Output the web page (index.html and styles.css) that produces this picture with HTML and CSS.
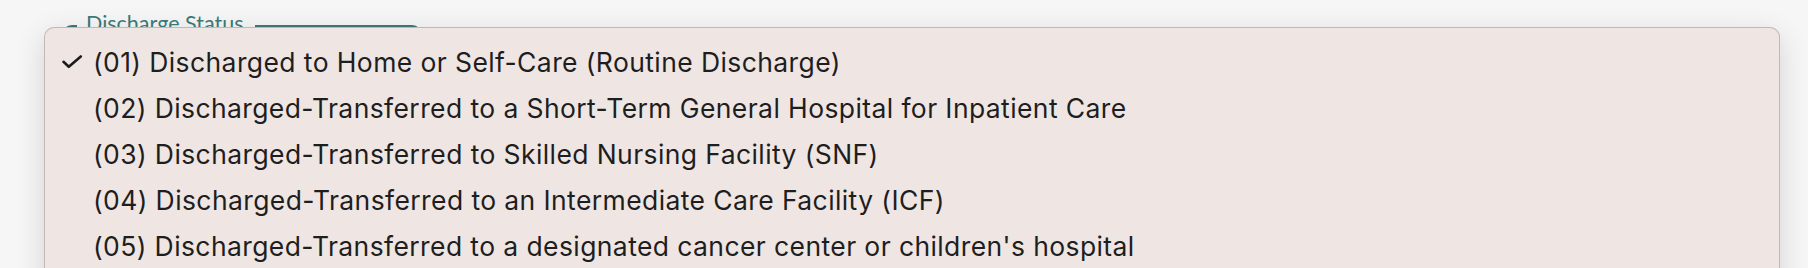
FILE: index.html
```html
<!DOCTYPE html>
<html lang="en">
<head>
  <meta charset="UTF-8">
  <title>Discharge Status</title>
  <link rel="stylesheet" href="styles.css">
</head>
<body>
  <!-- form field behind the open menu -->
  <div class="form-area">
    <fieldset class="field">
      <legend class="field-label">Discharge Status</legend>
    </fieldset>
  </div>

  <!-- open select menu -->
  <ul class="menu">
    <li class="menu-item selected">
      <span class="check">
        <svg width="21" height="14" viewBox="0 0 21 14"><polyline points="1.5,6.8 6.8,11.8 18.8,1.5" fill="none" stroke="#1c1c1c" stroke-width="2.6" stroke-linecap="round" stroke-linejoin="round"/></svg>
      </span>
      <span class="label">(01) Discharged to Home or Self-Care (Routine Discharge)</span>
    </li>
    <li class="menu-item">
      <span class="check"></span>
      <span class="label">(02) Discharged-Transferred to a Short-Term General Hospital for Inpatient Care</span>
    </li>
    <li class="menu-item">
      <span class="check"></span>
      <span class="label">(03) Discharged-Transferred to Skilled Nursing Facility (SNF)</span>
    </li>
    <li class="menu-item">
      <span class="check"></span>
      <span class="label">(04) Discharged-Transferred to an Intermediate Care Facility (ICF)</span>
    </li>
    <li class="menu-item">
      <span class="check"></span>
      <span class="label">(05) Discharged-Transferred to a designated cancer center or children's hospital</span>
    </li>
  </ul>
</body>
</html>
```

FILE: styles.css
```css
* {
  box-sizing: border-box;
}

body {
  margin: 0;
  height: 268px;
  overflow: hidden;
  background: #f6f6f6;
  font-family: Inter, 'Noto Sans', sans-serif;
  color: #1e1e1e;
}

/* 폼 필드 */
.form-area {
  padding: 13px 0 0 62px;
}

.field {
  width: 360px;
  height: 70px;
  margin: 0;
  padding: 0 13px;
  border: 2.5px solid #3d7a78;
  border-radius: 10px;
}

.field-label {
  padding: 0 12px 4px 9px;
  font-family: Lato, sans-serif;
  font-size: 21.5px;
  line-height: 21px;
  color: #3d7a78;
}

/* 드롭다운 메뉴 */
.menu {
  position: absolute;
  top: 27px;
  left: 44px;
  right: 28px;
  height: 400px;
  margin: 0;
  padding: 11px 0 0;
  list-style: none;
  background: #efe6e4;
  border: 1px solid rgba(0, 0, 0, 0.2);
  border-radius: 10px;
  box-shadow: 0 8px 30px rgba(0, 0, 0, 0.14);
}

.menu-item {
  display: grid;
  grid-template-columns: 48px 1fr;
  align-items: center;
  height: 46px;
  font-size: 26.5px;
  line-height: 46px;
  letter-spacing: 0.4px;
  white-space: nowrap;
}

.check {
  display: flex;
  align-items: center;
  padding-left: 17px;
}
```
